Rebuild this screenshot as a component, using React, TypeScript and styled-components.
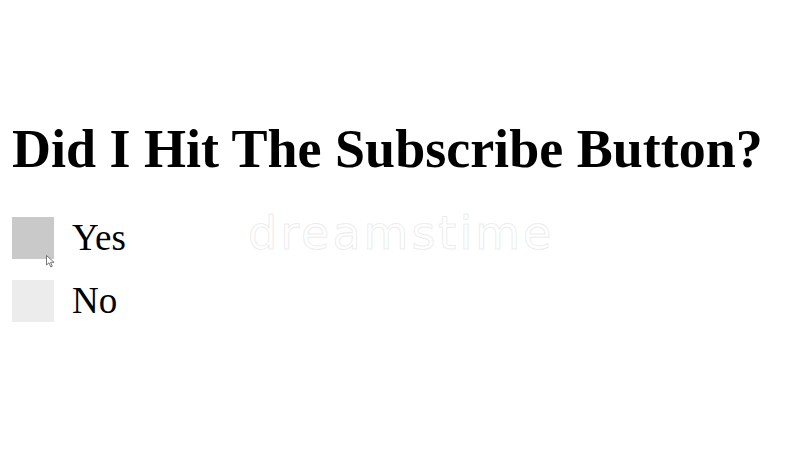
import React from 'react';
import styled, { createGlobalStyle } from 'styled-components';

const GlobalStyle = createGlobalStyle`
  html, body {
    margin: 0;
    padding: 0;
    background: #ffffff;
  }
  body {
    font-family: "Liberation Serif", "Times New Roman", serif;
    color: #000000;
  }
`;

const Page = styled.div`
  position: relative;
  width: 800px;
  height: 450px;
  overflow: hidden;
  box-sizing: border-box;
  padding: 118px 0 0 12px;
`;

const Title = styled.h1`
  margin: 0;
  font-size: 54px;
  font-weight: 700;
  line-height: 62px;
  letter-spacing: 0;
  white-space: nowrap;
`;

const Options = styled.div`
  display: flex;
  flex-direction: column;
  gap: 21px;
  margin-top: 37px;
`;

const Option = styled.label`
  position: relative;
  display: flex;
  align-items: center;
  gap: 18px;
  height: 42px;
`;

const Box = styled.span<{ $shade: string }>`
  width: 42px;
  height: 42px;
  background: ${(p) => p.$shade};
`;

const Label = styled.span`
  font-size: 37px;
  line-height: 42px;
`;

const Cursor = styled.svg`
  position: absolute;
  left: 34px;
  top: 38px;
  width: 9px;
  height: 13px;
`;

const Watermark = styled.div`
  position: absolute;
  left: 248px;
  top: 206px;
  font-family: "DejaVu Sans", sans-serif;
  font-size: 46px;
  letter-spacing: 3px;
  color: transparent;
  -webkit-text-stroke: 1px rgba(200, 200, 200, 0.35);
  pointer-events: none;
`;

export default function App() {
  return (
    <>
      <GlobalStyle />
      <Page>
        <Title>Did I Hit The Subscribe Button?</Title>
        <Options>
          <Option>
            <Box $shade="#c9c9c9" />
            <Label>Yes</Label>
            <Cursor viewBox="0 0 9 13">
              <path d="M0.5 0.5 L0.5 10 L3 7.8 L4.8 12 L6.3 11.3 L4.6 7.3 L8 7.3 Z" fill="#fff" stroke="#555" strokeWidth="0.8" />
            </Cursor>
          </Option>
          <Option>
            <Box $shade="#ececec" />
            <Label>No</Label>
          </Option>
        </Options>
        <Watermark>dreamstime</Watermark>
      </Page>
    </>
  );
}
